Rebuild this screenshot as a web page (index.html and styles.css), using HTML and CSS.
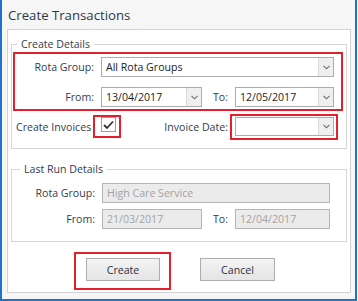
FILE: index.html
```html
<!DOCTYPE html>
<html>
<head>
<meta charset="utf-8">
<title>Create Transactions</title>
<link rel="stylesheet" href="styles.css">
</head>
<body>
<div class="window">
  <div class="title">Create Transactions</div>
  <div class="panel">
    <fieldset class="group group-create">
      <legend>Create Details</legend>
      <div class="hl hl-main">
        <div class="row">
          <span class="lbl">Rota Group:</span>
          <div class="combo grow">
            <span class="val">All Rota Groups</span>
            <span class="drop"><svg width="7" height="5" viewBox="0 0 7 5"><polyline points="0.5,0.8 3.5,3.8 6.5,0.8" fill="none" stroke="#6b6b6b" stroke-width="1.1"/></svg></span>
          </div>
        </div>
        <div class="row row-next">
          <span class="lbl">From:</span>
          <div class="combo date-from">
            <span class="val">13/04/2017</span>
            <span class="drop"><svg width="7" height="5" viewBox="0 0 7 5"><polyline points="0.5,0.8 3.5,3.8 6.5,0.8" fill="none" stroke="#6b6b6b" stroke-width="1.1"/></svg></span>
          </div>
          <span class="lbl-to">To:</span>
          <div class="combo grow">
            <span class="val">12/05/2017</span>
            <span class="drop"><svg width="7" height="5" viewBox="0 0 7 5"><polyline points="0.5,0.8 3.5,3.8 6.5,0.8" fill="none" stroke="#6b6b6b" stroke-width="1.1"/></svg></span>
          </div>
        </div>
      </div>
      <div class="row row-inv">
        <span class="lbl-inv">Create Invoices</span>
        <div class="hl hl-check">
          <span class="check"><svg width="15" height="15" viewBox="0 0 15 15"><polyline points="3,8 6,11 12,4.5" fill="none" stroke="#333" stroke-width="1.8"/></svg></span>
        </div>
        <span class="lbl-date">Invoice Date:</span>
        <div class="hl hl-date">
          <div class="combo combo-inv">
            <span class="val"></span>
            <span class="drop"><svg width="7" height="5" viewBox="0 0 7 5"><polyline points="0.5,0.8 3.5,3.8 6.5,0.8" fill="none" stroke="#6b6b6b" stroke-width="1.1"/></svg></span>
          </div>
        </div>
      </div>
    </fieldset>

    <fieldset class="group group-last">
      <legend>Last Run Details</legend>
      <div class="row">
        <span class="lbl lbl-last">Rota Group:</span>
        <div class="input grow">High Care Service</div>
      </div>
      <div class="row row-last">
        <span class="lbl lbl-last">From:</span>
        <div class="input last-from">21/03/2017</div>
        <span class="lbl-to">To:</span>
        <div class="input grow">12/04/2017</div>
      </div>
    </fieldset>

    <div class="buttons">
      <div class="hl hl-btn"><button class="btn">Create</button></div>
      <button class="btn btn-cancel">Cancel</button>
    </div>
  </div>
</div>
</body>
</html>
```

FILE: styles.css
```css
* { box-sizing: border-box; }

html, body {
  margin: 0;
  padding: 0;
  background: #ffffff;
}

body {
  width: 358px;
  height: 301px;
  overflow: hidden;
  font-family: "Open Sans", "Noto Sans", sans-serif;
  font-size: 10.6px;
  color: #333c4e;
}

.window {
  width: 357px;
  height: 301px;
  border: 2px solid #1f74c9;
  border-top: 0;
  background: #f6f6f6;
}

.title {
  height: 29px;
  padding: 2px 0 0 6px;
  line-height: 27px;
  font-size: 13.2px;
  color: #2f3847;
}

.panel {
  margin-left: 5px;
  width: 344px;
  height: 264px;
  border: 1px solid #d3d3d3;
  background: #ffffff;
  padding: 0 3px;
}

.group {
  margin: 0;
  min-width: 0;
  border: 1px solid #d6d6d6;
}

.group legend {
  padding: 0 4px;
  margin-left: 5px;
  line-height: 17px;
}

.group-create {
  margin-top: 6px;
  padding: 0 0 8px 0;
}

.group-last {
  margin-top: 12px;
  padding: 5px 16px 12px 3px;
}

.hl {
  border: 2px solid #e4202c;
}

.hl-main {
  margin: -1px 0 0 1px;
  width: 330px;
  height: 59px;
  padding: 3px 7px 0 0;
}

.row {
  display: flex;
  align-items: center;
  height: 20px;
}

.row-next { margin-top: 10px; }
.row-last { margin-top: 6px; }

.lbl {
  width: 79px;
  margin-right: 7px;
  text-align: right;
  white-space: nowrap;
}

.lbl-last { width: 80px; }

.lbl-to {
  width: 16px;
  margin: 0 6px 0 11px;
  white-space: nowrap;
}

.grow { flex: 1; }

.combo {
  display: flex;
  height: 20px;
  border: 1px solid #acacac;
  background: #ffffff;
}

.combo .val {
  flex: 1;
  padding-left: 4px;
  line-height: 18px;
  color: #1c1c1c;
  white-space: nowrap;
}

.combo .drop {
  width: 15px;
  border-left: 1px solid #dadada;
  background: #efefef;
  display: flex;
  align-items: center;
  justify-content: center;
}

.date-from { width: 101px; }

.row-inv {
  margin-top: 3px;
  height: 26px;
  padding-left: 4px;
  align-items: flex-start;
}

.lbl-inv {
  width: 77px;
  line-height: 26px;
  white-space: nowrap;
}

.hl-check {
  margin-top: 1px;
  width: 28px;
  height: 23px;
  padding-left: 6px;
}

.check {
  display: block;
  width: 15px;
  height: 15px;
  border: 1px solid #9e9e9e;
  background: #ffffff;
}

.check svg {
  display: block;
  margin: -1px;
}

.lbl-date {
  width: 109px;
  padding-right: 2px;
  text-align: right;
  line-height: 26px;
  white-space: nowrap;
}

.hl-date {
  width: 108px;
  height: 26px;
  padding: 1px 0 0 3px;
}

.combo-inv {
  width: 99px;
  height: 19px;
}

.input {
  height: 20px;
  border: 1px solid #b5b5b5;
  background: #ebebeb;
  color: #a3a3a3;
  padding-left: 4px;
  line-height: 18px;
  white-space: nowrap;
  overflow: hidden;
}

.last-from { width: 100px; }

.buttons {
  display: flex;
  align-items: flex-start;
  margin-top: 10px;
  padding-left: 63px;
}

.hl-btn {
  width: 97px;
  height: 38px;
  padding: 4px 0 0 10px;
}

.btn {
  display: block;
  width: 74px;
  height: 23px;
  margin: 0;
  padding: 0;
  border: 1px solid #adadad;
  background: linear-gradient(#f3f3f3, #e5e5e5);
  font-family: "Open Sans", "Noto Sans", sans-serif;
  font-size: 10.6px;
  color: #2a3140;
}

.btn-cancel {
  width: 75px;
  margin: 6px 0 0 29px;
}
```
